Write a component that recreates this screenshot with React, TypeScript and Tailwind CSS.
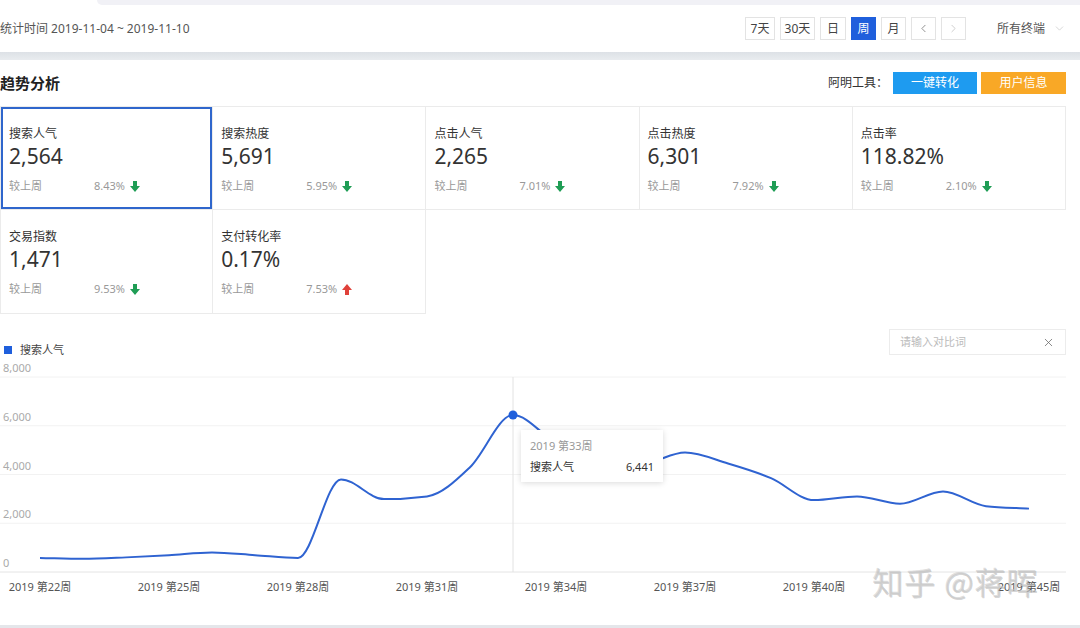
import { ChevronDown, ChevronLeft, ChevronRight, X } from 'lucide-react';

const cards = [
    { title: '搜索人气', value: '2,564', pct: '8.43%', up: false },
    { title: '搜索热度', value: '5,691', pct: '5.95%', up: false },
    { title: '点击人气', value: '2,265', pct: '7.01%', up: false },
    { title: '点击热度', value: '6,301', pct: '7.92%', up: false },
    { title: '点击率', value: '118.82%', pct: '2.10%', up: false },
    { title: '交易指数', value: '1,471', pct: '9.53%', up: false },
    { title: '支付转化率', value: '0.17%', pct: '7.53%', up: true },
];

// weekly values, week 22 .. 45
const data = [
    575, 540, 600, 690, 800, 690, 575, 3800, 2990, 3100, 4300, 6441,
    5300, 4550, 4450, 4900, 4450, 3850, 2950, 3100, 2800, 3300, 2700, 2600,
];

const ranges = [
    { label: '7天', w: 'w-[30px]' },
    { label: '30天', w: 'w-[35px]' },
    { label: '日', w: 'w-[26px]' },
    { label: '周', w: 'w-[25px]' },
    { label: '月', w: 'w-[25px]' },
];

const BASE = 212;
const STEP = 43;
const px = (i: number) => 40 + i * STEP;
const py = (v: number) => BASE - (v * 195) / 8000;

// monotone cubic, so the line never dips past its points
const smoothPath = () => {
    const ys = data.map(py);
    const n = ys.length;
    const s = ys.slice(0, -1).map((y, i) => (ys[i + 1] - y) / STEP);
    const t = ys.map((_, i) => {
        if (i === 0) return s[0];
        if (i === n - 1) return s[n - 2];
        const a = s[i - 1];
        const b = s[i];
        if (a * b <= 0) return 0;
        const p = (a + b) / 2;
        return (Math.sign(a) + Math.sign(b)) * Math.min(Math.abs(a), Math.abs(b), 0.5 * Math.abs(p));
    });
    let d = `M${px(0)},${ys[0]}`;
    for (let i = 0; i < n - 1; i++) {
        const h = STEP / 3;
        d += ` C${px(i) + h},${ys[i] + t[i] * h} ${px(i + 1) - h},${ys[i + 1] - t[i + 1] * h} ${px(i + 1)},${ys[i + 1]}`;
    }
    return d;
};

const Arrow = ({ up }: { up: boolean }) => (
    <svg width="10" height="11" viewBox="0 0 10 11" className={up ? 'rotate-180' : ''}>
        <path d="M3 0h4v5h3L5 11 0 5h3z" fill={up ? '#e0413a' : '#1f9d55'} />
    </svg>
);

const App = () => {
    return (
        <div className="relative w-[1080px] h-[628px] overflow-hidden bg-white text-[#333] font-['Noto_Sans','Noto_Sans_CJK_SC',sans-serif]">
            {/* top strip */}
            <div className="flex h-[5px]">
                <div className="w-[97px]" />
                <div className="flex-1 bg-[#f1f1f6] rounded-bl-[6px]" />
            </div>

            {/* stats time bar */}
            <div className="flex h-[47px] items-center justify-between pr-[14px]">
                <span className="text-[12px] text-[#555]">统计时间 2019-11-04 ~ 2019-11-10</span>
                <div className="flex items-center">
                    <div className="flex items-center gap-[5px]">
                        {ranges.map((r) => (
                            <div
                                key={r.label}
                                className={
                                    r.label === '周'
                                        ? `${r.w} h-[23px] flex items-center justify-center bg-[#1f5fdc] border border-[#1f5fdc] text-white text-[12px]`
                                        : `${r.w} h-[23px] flex items-center justify-center border border-[#e3e3e3] text-[12px] text-[#444]`
                                }
                            >
                                {r.label}
                            </div>
                        ))}
                        <div className="h-[23px] w-[25px] flex items-center justify-center border border-[#e3e3e3] text-[#777]">
                            <ChevronLeft size={13} strokeWidth={1.5} />
                        </div>
                        <div className="h-[23px] w-[25px] flex items-center justify-center border border-[#e3e3e3] text-[#c4c4c4]">
                            <ChevronRight size={13} strokeWidth={1.5} />
                        </div>
                    </div>
                    <span className="ml-[31px] text-[12px] text-[#555]">所有终端</span>
                    <ChevronDown size={13} strokeWidth={1.3} className="ml-[8px] text-[#c8c8c8]" />
                </div>
            </div>

            <div className="h-[8px] bg-gradient-to-b from-[#dde1e6] to-[#e9ecef]" />

            {/* header */}
            <div className="flex h-[46px] items-center justify-between pr-[14px]">
                <h2 className="text-[15px] font-bold text-[#222]">趋势分析</h2>
                <div className="flex items-center text-[12px]">
                    <span className="mr-[5px] text-[#333]">阿明工具：</span>
                    <div className="w-[84px] h-[22px] flex items-center justify-center bg-[#1e9bf0] text-white">一键转化</div>
                    <div className="ml-[4px] w-[85px] h-[22px] flex items-center justify-center bg-[#f9a826] text-white">用户信息</div>
                </div>
            </div>

            {/* metric cards */}
            <div className="grid grid-cols-5 w-[1066px]">
                {cards.map((c, i) => (
                    <div
                        key={c.title}
                        className={`h-[104px] pl-[8px] pt-[18px] border-r border-b border-[#ebebeb] ${i < 5 ? 'border-t' : ''} ${i % 5 === 0 ? 'border-l' : ''} ${i === 0 ? 'shadow-[inset_0_0_0_2px_#2f66cc] border-[#2f66cc]' : ''}`}
                    >
                        <div className="text-[12px] leading-[18px] text-[#333]">{c.title}</div>
                        <div className="text-[21px] leading-[27px] text-[#333]">{c.value}</div>
                        <div className="flex items-center mt-[8px] text-[11px] text-[#999]">
                            <span className="w-[85px]">较上周</span>
                            <span className="mr-[5px]">{c.pct}</span>
                            <Arrow up={c.up} />
                        </div>
                    </div>
                ))}
            </div>

            {/* chart */}
            <div className="flex items-start justify-between pr-[14px] mt-[15px] h-[31px]">
                <div className="flex items-center mt-[13px] ml-[4px]">
                    <div className="w-[8px] h-[8px] bg-[#1f5fdc]" />
                    <span className="ml-[8px] text-[11px] text-[#444]">搜索人气</span>
                </div>
                <div className="w-[177px] h-[26px] flex items-center justify-between border border-[#ececec] px-[10px] text-[11px] text-[#bbb]">
                    <span>请输入对比词</span>
                    <X size={13} strokeWidth={1.4} className="text-[#666]" />
                </div>
            </div>

            <div className="relative h-[250px]">
                <svg width="1080" height="250" className="block">
                    {[8000, 6000, 4000, 2000, 0].map((v) => (
                        <g key={v}>
                            <line x1="0" x2="1066" y1={py(v)} y2={py(v)} stroke={v === 0 ? '#e4e4e4' : '#f2f2f2'} />
                            <text x="3" y={py(v) - 5} fontSize="11" fill="#aaa">
                                {v.toLocaleString('en-US')}
                            </text>
                        </g>
                    ))}
                    <line x1={px(11)} x2={px(11)} y1={py(8000)} y2={BASE} stroke="#e2e2e2" />
                    <path d={smoothPath()} fill="none" stroke="#2f63d1" strokeWidth="2" />
                    <circle cx={px(11)} cy={py(6441)} r="4.5" fill="#1f5fdc" />
                    {[0, 3, 6, 9, 12, 15, 18, 23].map((i) => (
                        <text key={i} x={px(i)} y="231" fontSize="11" fill="#555" textAnchor="middle">
                            2019 第{22 + i}周
                        </text>
                    ))}
                </svg>

                <div className="absolute left-[521px] top-[70px] w-[142px] h-[52px] bg-white shadow-[0_1px_6px_rgba(0,0,0,0.15)] px-[9px] pt-[9px] text-[11px]">
                    <div className="text-[#999] leading-[14px]">2019 第33周</div>
                    <div className="flex justify-between mt-[7px] text-[#333] leading-[14px]">
                        <span>搜索人气</span>
                        <span>6,441</span>
                    </div>
                </div>
            </div>

            <div className="absolute left-0 right-0 bottom-0 h-[3px] bg-[#e4e6ea]" />

            {/* watermark */}
            <div className="absolute left-[872px] top-[563px] text-[31px] leading-[36px] tracking-[1px] text-[rgba(200,200,200,0.6)] [text-shadow:1px_1px_0_rgba(110,110,110,0.3)] font-['Noto_Sans_CJK_SC',sans-serif]">
                知乎 @蒋晖
            </div>
        </div>
    );
};

export default App;
